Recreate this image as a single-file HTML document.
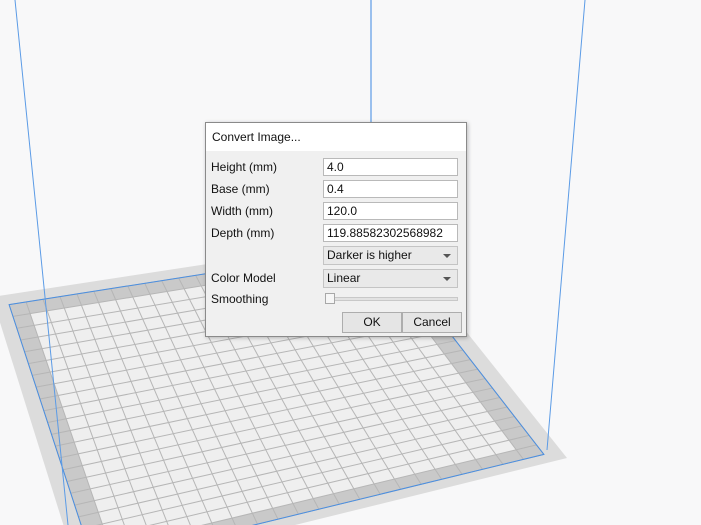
<!DOCTYPE html>
<html><head><meta charset="utf-8"><style>
html,body{margin:0;padding:0;width:701px;height:525px;overflow:hidden;background:#f8f8f9;font-family:"Liberation Sans",sans-serif}
#scene{position:absolute;left:0;top:0;display:block}
.dlg{position:absolute;left:205px;top:122px;width:262px;height:215px;background:#f0f0f0;border:1px solid #8a8a8a;box-sizing:border-box;box-shadow:1px 1px 4px rgba(0,0,0,.25)}
.title{position:absolute;left:0;top:0;right:0;height:28px;background:#fff;font-size:12px;color:#111;line-height:28px;padding-left:6px}
.lbl{position:absolute;left:5px;font-size:12px;color:#111}
.inp{position:absolute;left:117px;width:135px;height:18px;background:#fff;border:1px solid #b9b9b9;box-sizing:border-box;font-size:12px;line-height:16px;padding-left:3px;color:#111}
.cmb{position:absolute;left:117px;width:135px;height:19px;background:#e9e9e9;border:1px solid #c4c4c4;box-sizing:border-box;font-size:12px;line-height:17px;padding-left:3px;color:#111}
.cmb:after{content:"";position:absolute;right:6px;top:7px;border-left:4px solid transparent;border-right:4px solid transparent;border-top:4px solid #555}
.btn{position:absolute;top:189px;height:21px;background:#e5e5e5;border:1px solid #adadad;box-sizing:border-box;font-size:12px;line-height:19px;text-align:center;color:#111}
</style></head><body>
<svg id="scene" width="701" height="525" xmlns="http://www.w3.org/2000/svg"></svg>
<div class="dlg">
<div class="title">Convert Image...</div>
<div class="lbl" style="top:37px">Height (mm)</div>
<div class="lbl" style="top:59px">Base (mm)</div>
<div class="lbl" style="top:81px">Width (mm)</div>
<div class="lbl" style="top:103px">Depth (mm)</div>
<div class="lbl" style="top:148px">Color Model</div>
<div class="lbl" style="top:169px">Smoothing</div>
<div class="inp" style="top:35px">4.0</div>
<div class="inp" style="top:57px">0.4</div>
<div class="inp" style="top:79px">120.0</div>
<div class="inp" style="top:101px">119.88582302568982</div>
<div class="cmb" style="top:123px">Darker is higher</div>
<div class="cmb" style="top:146px">Linear</div>
<div style="position:absolute;left:122px;top:174px;width:130px;height:4px;background:#e2e2e2;border:1px solid #c8c8c8;box-sizing:border-box"></div>
<div style="position:absolute;left:119px;top:170px;width:10px;height:11px;background:#f6f6f6;border:1px solid #a8a8a8;box-sizing:border-box"></div>
<div class="btn" style="left:136px;width:60px">OK</div>
<div class="btn" style="left:196px;width:60px">Cancel</div>
</div>
<script>
var s=document.getElementById('scene'),h='';
var TL=[-8,297],TR=[390,236],FR=[567,458],FL=[80,578];
function P(u,v){return[(1-u)*(1-v)*TL[0]+u*(1-v)*TR[0]+u*v*FR[0]+(1-u)*v*FL[0],(1-u)*(1-v)*TL[1]+u*(1-v)*TR[1]+u*v*FR[1]+(1-u)*v*FL[1]];}
function quad(a,b,c,d,f,st){var p=[P(a,c),P(b,c),P(b,d),P(a,d)];return '<polygon points="'+p.map(function(q){return q[0].toFixed(1)+','+q[1].toFixed(1)}).join(' ')+'" fill="'+f+'" '+(st||'')+'/>';}
h+=quad(0,1,0,1,'#dcdcdc');
var m=0.035,n=22,c=(1-2*m)/n;
h+=quad(m,1-m,m,1-m,'#c9c9c9');
h+=quad(m+c,1-m-c,m+c,1-m-c,'#efefef');
for(var i=0;i<=n;i++){var t=m+i*c;var a=P(t,m),b=P(t,1-m),e=P(m,t),f=P(1-m,t);
h+='<line x1="'+a[0]+'" y1="'+a[1]+'" x2="'+b[0]+'" y2="'+b[1]+'" stroke="#b6b6b6" stroke-width="1"/>';
h+='<line x1="'+e[0]+'" y1="'+e[1]+'" x2="'+f[0]+'" y2="'+f[1]+'" stroke="#b6b6b6" stroke-width="1"/>';}
h+=quad(m,1-m,m,1-m,'none','stroke="#4a8ee0" stroke-width="1"');
h+='<line x1="15" y1="0" x2="68" y2="525" stroke="#5b9be6" stroke-width="1"/>';
h+='<line x1="371" y1="0" x2="371" y2="125" stroke="#5b9be6" stroke-width="1.2"/>';
h+='<line x1="585" y1="0" x2="547" y2="450" stroke="#5b9be6" stroke-width="1"/>';
s.innerHTML=h;
</script>
</body></html>
